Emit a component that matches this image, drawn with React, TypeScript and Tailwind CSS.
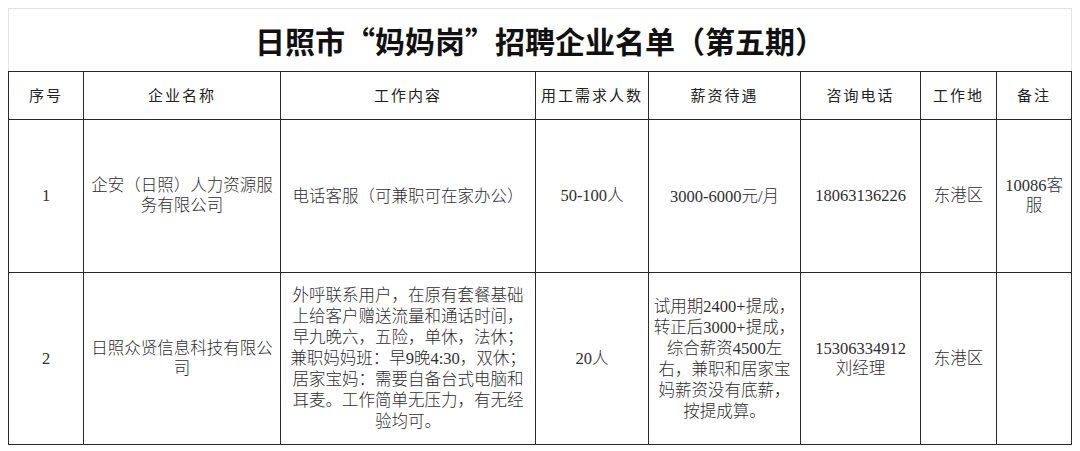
import React from 'react';

type Row = {
  no: string;
  company: React.ReactNode;
  content: React.ReactNode;
  count: string;
  salary: React.ReactNode;
  phone: React.ReactNode;
  place: string;
  note: React.ReactNode;
  height: string;
};

const headers = ['序号', '企业名称', '工作内容', '用工需求人数', '薪资待遇', '咨询电话', '工作地', '备注'];
const widths = ['w-[75px]', 'w-[197px]', 'w-[255px]', 'w-[113px]', 'w-[152px]', 'w-[120px]', 'w-[76px]', 'w-[75px]'];

const rows: Row[] = [
  {
    no: '1',
    company: (
      <>
        企安（日照）人力资源服
        <br />
        务有限公司
      </>
    ),
    content: '电话客服（可兼职可在家办公）',
    count: '50-100人',
    salary: '3000-6000元/月',
    phone: '18063136226',
    place: '东港区',
    note: (
      <>
        10086客
        <br />
        服
      </>
    ),
    height: 'h-[153px]',
  },
  {
    no: '2',
    company: (
      <>
        日照众贤信息科技有限公
        <br />
        司
      </>
    ),
    content: (
      <>
        外呼联系用户，在原有套餐基础
        <br />
        上给客户赠送流量和通话时间，
        <br />
        早九晚六，五险，单休，法休；
        <br />
        兼职妈妈班：早9晚4:30，双休；
        <br />
        居家宝妈：需要自备台式电脑和
        <br />
        耳麦。工作简单无压力，有无经
        <br />
        验均可。
      </>
    ),
    count: '20人',
    salary: (
      <>
        试用期2400+提成，
        <br />
        转正后3000+提成，
        <br />
        综合薪资4500左
        <br />
        右，兼职和居家宝
        <br />
        妈薪资没有底薪，
        <br />
        按提成算。
      </>
    ),
    phone: (
      <>
        15306334912
        <br />
        刘经理
      </>
    ),
    place: '东港区',
    note: '',
    height: 'h-[172px]',
  },
];

const cell = 'border border-[#2a2a2a] text-center align-middle p-0';
const body = "font-['Liberation_Serif','Noto_Sans_CJK_SC',serif] text-[16.5px] leading-[20px] text-[#2e2e2e] font-light";

const App: React.FC = () => {
  return (
    <div className="w-[1080px] h-[451px] bg-white p-2 overflow-hidden">
      <div className="w-[1064px] border-t border-x border-[#e2e2e2]">
        <div className="h-[62px] flex items-center justify-center">
          <h1 className="font-['Noto_Sans_CJK_SC',sans-serif] font-bold text-[30px] text-[#111]">
            日照市“妈妈岗”招聘企业名单（第五期）
          </h1>
        </div>
      </div>
      <table className="w-[1063px] border-collapse table-fixed">
        <thead>
          <tr className="h-[48px]">
            {headers.map((h, i) => (
              <th
                key={h}
                className={`${cell} ${widths[i]} font-['Noto_Sans_CJK_SC',sans-serif] font-normal text-[15px] tracking-[2px] text-[#222]`}
              >
                {h}
              </th>
            ))}
          </tr>
        </thead>
        <tbody>
          {rows.map(r => (
            <tr key={r.no} className={r.height}>
              <td className={`${cell} ${body}`}>{r.no}</td>
              <td className={`${cell} ${body}`}>{r.company}</td>
              <td className={`${cell} ${body} leading-[21px]`}>{r.content}</td>
              <td className={`${cell} ${body}`}>{r.count}</td>
              <td className={`${cell} ${body} leading-[21px]`}>{r.salary}</td>
              <td className={`${cell} ${body}`}>{r.phone}</td>
              <td className={`${cell} ${body}`}>{r.place}</td>
              <td className={`${cell} ${body}`}>{r.note}</td>
            </tr>
          ))}
        </tbody>
      </table>
    </div>
  );
};

export default App;
